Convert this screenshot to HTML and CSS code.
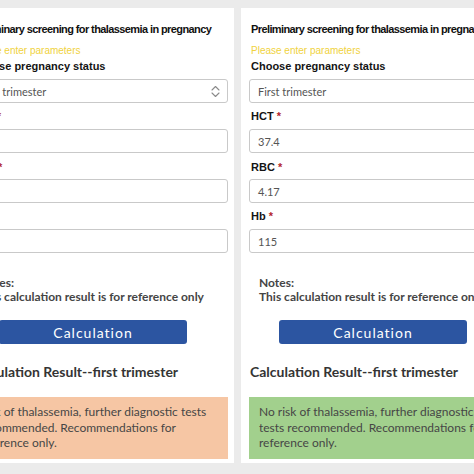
FILE: index.html
```html
<!DOCTYPE html>
<html lang="en">
<head>
<meta charset="utf-8">
<title>Preliminary screening for thalassemia in pregnancy</title>
<link rel="stylesheet" href="styles.css">
</head>
<body>
<div class="stage">
  <section class="panel">
    <h1 class="title">Preliminary screening for thalassemia in pregnancy</h1>
    <p class="hint">Please enter parameters</p>
    <p class="label">Choose pregnancy status</p>
    <div class="field select">
      <span class="value">First trimester</span>
      <svg class="chev" width="9" height="13" viewBox="0 0 9 13"><path d="M1 5 L4.5 1.5 L8 5 M1 8 L4.5 11.5 L8 8" fill="none" stroke="#8a8a8a" stroke-width="1.1" stroke-linecap="round" stroke-linejoin="round"/></svg>
    </div>
    <p class="label gap-a">HCT <span class="req">*</span></p>
    <div class="field"><span class="value"></span></div>
    <p class="label gap-b">RBC <span class="req">*</span></p>
    <div class="field tight"><span class="value"></span></div>
    <p class="label gap-a">Hb <span class="req">*</span></p>
    <div class="field"><span class="value"></span></div>
    <div class="notes">
      <p>Notes:</p>
      <p>This calculation result is for reference only</p>
    </div>
    <button class="calc" type="button">Calculation</button>
    <h2 class="result-title">Calculation Result--first trimester</h2>
    <div class="result risk">Risk of thalassemia, further diagnostic tests recommended. Recommendations for reference only.</div>
  </section>
  <section class="panel">
    <h1 class="title">Preliminary screening for thalassemia in pregnancy</h1>
    <p class="hint">Please enter parameters</p>
    <p class="label">Choose pregnancy status</p>
    <div class="field select">
      <span class="value">First trimester</span>
      <svg class="chev" width="9" height="13" viewBox="0 0 9 13"><path d="M1 5 L4.5 1.5 L8 5 M1 8 L4.5 11.5 L8 8" fill="none" stroke="#8a8a8a" stroke-width="1.1" stroke-linecap="round" stroke-linejoin="round"/></svg>
    </div>
    <p class="label gap-a">HCT <span class="req">*</span></p>
    <div class="field"><span class="value">37.4</span></div>
    <p class="label gap-b">RBC <span class="req">*</span></p>
    <div class="field tight"><span class="value">4.17</span></div>
    <p class="label gap-a">Hb <span class="req">*</span></p>
    <div class="field"><span class="value">115</span></div>
    <div class="notes">
      <p>Notes:</p>
      <p>This calculation result is for reference only</p>
    </div>
    <button class="calc" type="button">Calculation</button>
    <h2 class="result-title">Calculation Result--first trimester</h2>
    <div class="result safe">No risk of thalassemia, further diagnostic tests recommended. Recommendations for reference only.</div>
  </section>
</div>
</body>
</html>
```

FILE: styles.css
```css
html, body {
  margin: 0;
  padding: 0;
  background: #ebebeb;
  overflow: hidden;
}

.stage {
  display: flex;
  gap: 7px;
  padding-top: 8px;
  margin-left: -39px;
  width: 600px;
}

.panel {
  flex: 0 0 auto;
  width: 273px;
  height: 455px;
  box-sizing: border-box;
  background: #ffffff;
  padding: 13px 6px 0 8px;
  display: flex;
  flex-direction: column;
  align-items: flex-start;
}

.title {
  margin: 0 0 0 2px;
  font-family: "Liberation Sans", Arial, sans-serif;
  font-weight: bold;
  font-size: 11px;
  line-height: 16px;
  letter-spacing: -0.6px;
  color: #111111;
  white-space: nowrap;
}

.hint {
  margin: 7px 0 0 2px;
  font-family: "Liberation Sans", Arial, sans-serif;
  font-size: 10px;
  line-height: 14px;
  color: #f0d23e;
}

.label {
  margin: 0 0 0 2px;
  font-family: "Liberation Sans", Arial, sans-serif;
  font-weight: bold;
  font-size: 11px;
  line-height: 16px;
  color: #141414;
}

.label.gap-a { margin-top: 5px; }
.label.gap-b { margin-top: 6px; }

.req {
  color: #b3262e;
}

.field {
  width: 259px;
  height: 24px;
  box-sizing: border-box;
  border: 1px solid #c9c9c9;
  border-radius: 3px;
  margin-top: 5px;
  padding: 0 7px 0 8px;
  display: flex;
  align-items: center;
  justify-content: space-between;
  background: #ffffff;
}

.field.tight { margin-top: 4px; }

.value {
  font-family: "Lato", "Open Sans", sans-serif;
  font-size: 11px;
  color: #555555;
}

.chev {
  display: block;
}

.notes {
  margin: 23px 0 0 10px;
  font-family: "Lato", "Open Sans", sans-serif;
  font-weight: bold;
  font-size: 12px;
  line-height: 14px;
  color: #454545;
}

.notes p {
  margin: 0;
  white-space: nowrap;
}

.calc {
  margin: 16px 0 0 30px;
  width: 188px;
  height: 24px;
  border: none;
  border-radius: 3px;
  background: #2c55a1;
  color: #ffffff;
  font-family: "Lato", "Open Sans", sans-serif;
  font-size: 14px;
  letter-spacing: 1px;
  padding: 0;
}

.result-title {
  margin: 18px 0 0 1px;
  font-family: "Lato", "Open Sans", sans-serif;
  font-weight: bold;
  font-size: 14px;
  line-height: 20px;
  color: #343434;
  white-space: nowrap;
}

.result {
  margin-top: 15px;
  width: 259px;
  height: 62px;
  box-sizing: border-box;
  padding: 7px 10px 0 10px;
  font-family: "Lato", "Open Sans", sans-serif;
  font-size: 12px;
  line-height: 15.5px;
  color: #464646;
}

.result.risk { background: #f6c6a4; }
.result.safe { background: #a2d08d; }
```
